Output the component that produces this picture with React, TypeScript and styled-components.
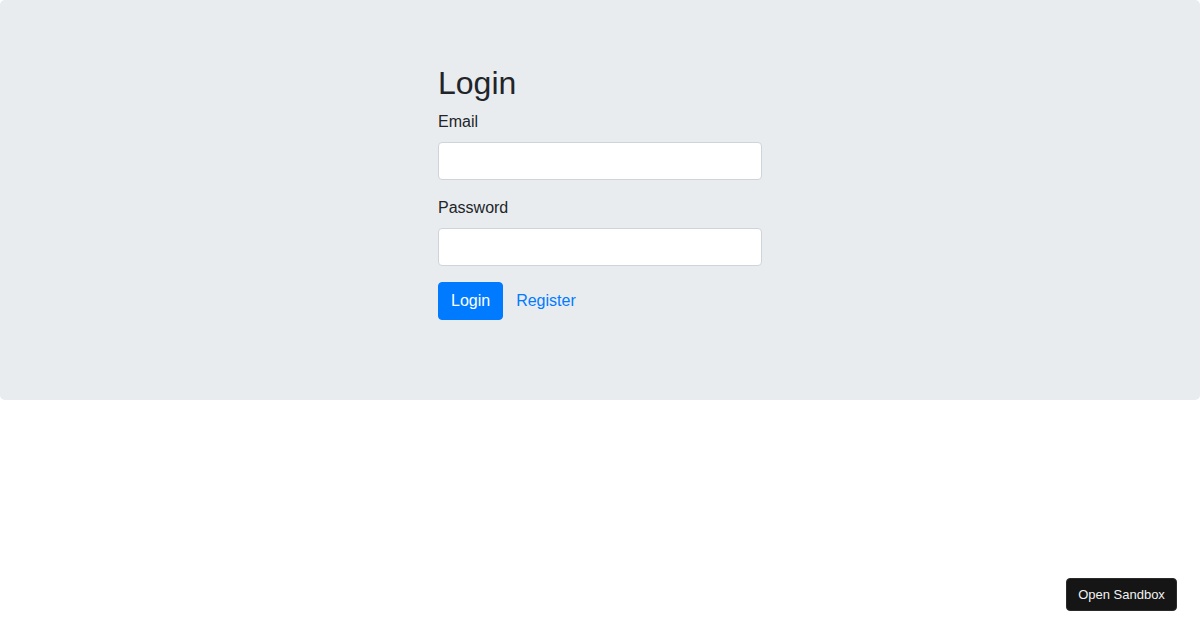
import React from "react";
import styled, { createGlobalStyle } from "styled-components";

const GlobalStyle = createGlobalStyle`
  *, *::before, *::after { box-sizing: border-box; }
  body {
    margin: 0;
    font-family: "Liberation Sans", Arial, sans-serif;
    font-size: 16px;
    line-height: 1.5;
    color: #212529;
    background: #fff;
  }
`;

const Jumbotron = styled.div`
  background: #e9ecef;
  padding: 64px 32px;
  border-radius: 4.8px;
  height: 400px;
  display: flex;
  justify-content: center;
`;

const FormColumn = styled.div`
  width: 324px;
`;

const Title = styled.h2`
  margin: 0 0 8px;
  font-size: 32px;
  font-weight: 500;
  line-height: 1.2;
`;

const Group = styled.div`
  margin-bottom: 16px;
`;

const Label = styled.label`
  display: block;
  margin-bottom: 8px;
`;

const Input = styled.input`
  display: block;
  width: 100%;
  height: 38px;
  padding: 6px 12px;
  font: inherit;
  color: #495057;
  background: #fff;
  border: 1px solid #ced4da;
  border-radius: 4px;
  outline: none;
`;

const Actions = styled.div`
  display: flex;
  align-items: center;
  gap: 13px;
`;

const Button = styled.button`
  height: 38px;
  padding: 6px 12px;
  font: inherit;
  color: #fff;
  background: #007bff;
  border: 1px solid #007bff;
  border-radius: 4px;
  cursor: pointer;
`;

const Link = styled.a`
  color: #007bff;
  text-decoration: none;
`;

const SandboxButton = styled.a`
  position: fixed;
  right: 23px;
  bottom: 19px;
  width: 111px;
  height: 33px;
  display: flex;
  align-items: center;
  justify-content: center;
  background: #151515;
  color: #f2f2f2;
  font-family: "Liberation Sans", Arial, sans-serif;
  font-size: 13px;
  border-radius: 4px;
  border: 1px solid #2a2a2a;
  text-decoration: none;
`;

export default function App() {
  return (
    <>
      <GlobalStyle />
      <Jumbotron>
        <FormColumn>
          <Title>Login</Title>
          <form onSubmit={(e) => e.preventDefault()}>
            <Group>
              <Label htmlFor="email">Email</Label>
              <Input id="email" type="text" />
            </Group>
            <Group>
              <Label htmlFor="password">Password</Label>
              <Input id="password" type="password" />
            </Group>
            <Group>
              <Actions>
                <Button type="submit">Login</Button>
                <Link href="#">Register</Link>
              </Actions>
            </Group>
          </form>
        </FormColumn>
      </Jumbotron>
      <SandboxButton href="#">Open Sandbox</SandboxButton>
    </>
  );
}
